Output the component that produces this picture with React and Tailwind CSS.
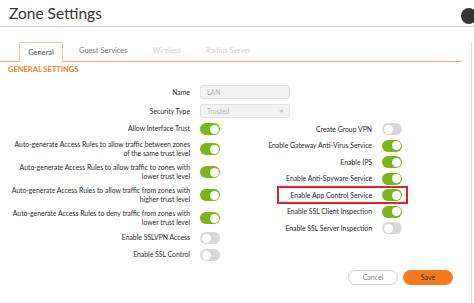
import React from 'react';

const Toggle = ({ on }) => (
  <div
    className={`w-[20px] h-[12px] rounded-full flex items-center shrink-0 px-[1.5px] ${
      on ? 'bg-[#7cb51b] justify-end' : 'bg-[#d8d8d8] justify-start'
    }`}
  >
    <div className="w-[9px] h-[9px] rounded-full bg-white" />
  </div>
);

const leftRows = [
  { label: ['Allow Interface Trust'], on: true },
  { label: ['Auto-generate Access Rules to allow traffic between zones', 'of the same trust level'], on: true },
  { label: ['Auto-generate Access Rules to allow traffic to zones with', 'lower trust level'], on: true },
  { label: ['Auto-generate Access Rules to allow traffic from zones with', 'higher trust level'], on: true },
  { label: ['Auto-generate Access Rules to deny traffic from zones with', 'lower trust level'], on: true },
  { label: ['Enable SSLVPN Access'], on: false },
  { label: ['Enable SSL Control'], on: false },
];

const rightRows = [
  { label: 'Create Group VPN', on: false },
  { label: 'Enable Gateway Anti-Virus Service', on: true },
  { label: 'Enable IPS', on: true },
  { label: 'Enable Anti-Spyware Service', on: true },
  { label: 'Enable App Control Service', on: true, marked: true },
  { label: 'Enable SSL Client Inspection', on: true },
  { label: 'Enable SSL Server Inspection', on: false },
];

export default function App() {
  return (
    <div className="w-[474px] h-[303px] bg-white relative overflow-hidden font-['Lato',sans-serif]">
      {/* Header */}
      <div className="h-[27px] border-b border-[#cdcdcd] flex items-center pl-[9px]">
        <h1 className="text-[15.5px] leading-none text-[#333] mt-[2px]">Zone Settings</h1>
      </div>
      <div className="absolute right-[-3px] top-[8px] w-[16px] h-[16px] rounded-full bg-[#333]" />

      {/* Body */}
      <div className="w-[472px] h-[276px] border-r border-[#dedede]">
        {/* Tabs */}
        <div className="mt-[15px] w-[462px] h-[20px] border-b border-[#f5a66a] flex items-end pl-[19px] text-[7.5px]">
          <div className="w-[44px] h-[20px] -mb-px bg-white border border-b-0 border-[#f4c6a0] rounded-t-[2px] flex items-center justify-center text-[#555]">
            General
          </div>
          <div className="h-[20px] flex items-center ml-[16px] text-[#777]">Guest Services</div>
          <div className="h-[20px] flex items-center ml-[25px] text-[#d0d0d0]">Wireless</div>
          <div className="h-[20px] flex items-center ml-[25px] text-[#d0d0d0]">Radius Server</div>
        </div>

        <div className="mt-[3px] pl-[8px] text-[7.5px] leading-[9px] font-bold text-[#f07b22]">GENERAL SETTINGS</div>

        {/* Name / type */}
        <div className="mt-[11px] flex flex-col gap-[5px] text-[6.85px] text-[#2a2a2a]">
          <div className="flex items-center h-[14px]">
            <div className="w-[190px] text-right">Name</div>
            <div className="ml-[10px] w-[90px] h-[14px] bg-[#f2f2f2] border border-[#e4e4e4] rounded-[2px] flex items-center pl-[6px] text-[#b5b5b5]">
              LAN
            </div>
          </div>
          <div className="flex items-center h-[14px]">
            <div className="w-[190px] text-right">Security Type</div>
            <div className="ml-[10px] w-[90px] h-[14px] bg-[#f2f2f2] border border-[#e4e4e4] rounded-[2px] flex items-center justify-between pl-[6px] pr-[5px] text-[#b5b5b5]">
              Trusted
              <svg width="5" height="3" viewBox="0 0 5 3">
                <path d="M0 0 L5 0 L2.5 3 Z" fill="#c4c4c4" />
              </svg>
            </div>
          </div>
        </div>

        {/* Toggles */}
        <div className="mt-[4px] flex text-[6.85px] text-[#2a2a2a]">
          <div className="w-[220px] flex flex-col gap-[3px]">
            {leftRows.map((r, i) => (
              <div key={i} className={`flex items-center justify-end gap-[10px] ${r.label.length > 1 ? 'h-[20px]' : 'h-[14px]'}`}>
                <div className="text-right leading-[9.5px]">
                  {r.label.map((l, j) => (
                    <div key={j}>{l}</div>
                  ))}
                </div>
                <Toggle on={r.on} />
              </div>
            ))}
          </div>
          <div className="ml-[20px] w-[162px] flex flex-col gap-[2.5px]">
            {rightRows.map((r, i) => (
              <div key={i} className="relative flex items-center justify-end gap-[10px] h-[14px]">
                <div className="text-right">{r.label}</div>
                <Toggle on={r.on} />
                {r.marked && (
                  <div className="absolute left-[37px] right-[-6px] top-[-2px] bottom-[-2px] border-2 border-[#e0202a]" />
                )}
              </div>
            ))}
          </div>
        </div>

        {/* Buttons */}
        <div className="mt-[8px] flex justify-end gap-[5px] pr-[18px] text-[7px]">
          <button className="w-[50px] h-[15px] rounded-full border border-[#cfcfcf] bg-white text-[#888]">Cancel</button>
          <button className="w-[50px] h-[15px] rounded-full bg-[#f47a20] text-[#4a2408]">Save</button>
        </div>
      </div>
    </div>
  );
}
